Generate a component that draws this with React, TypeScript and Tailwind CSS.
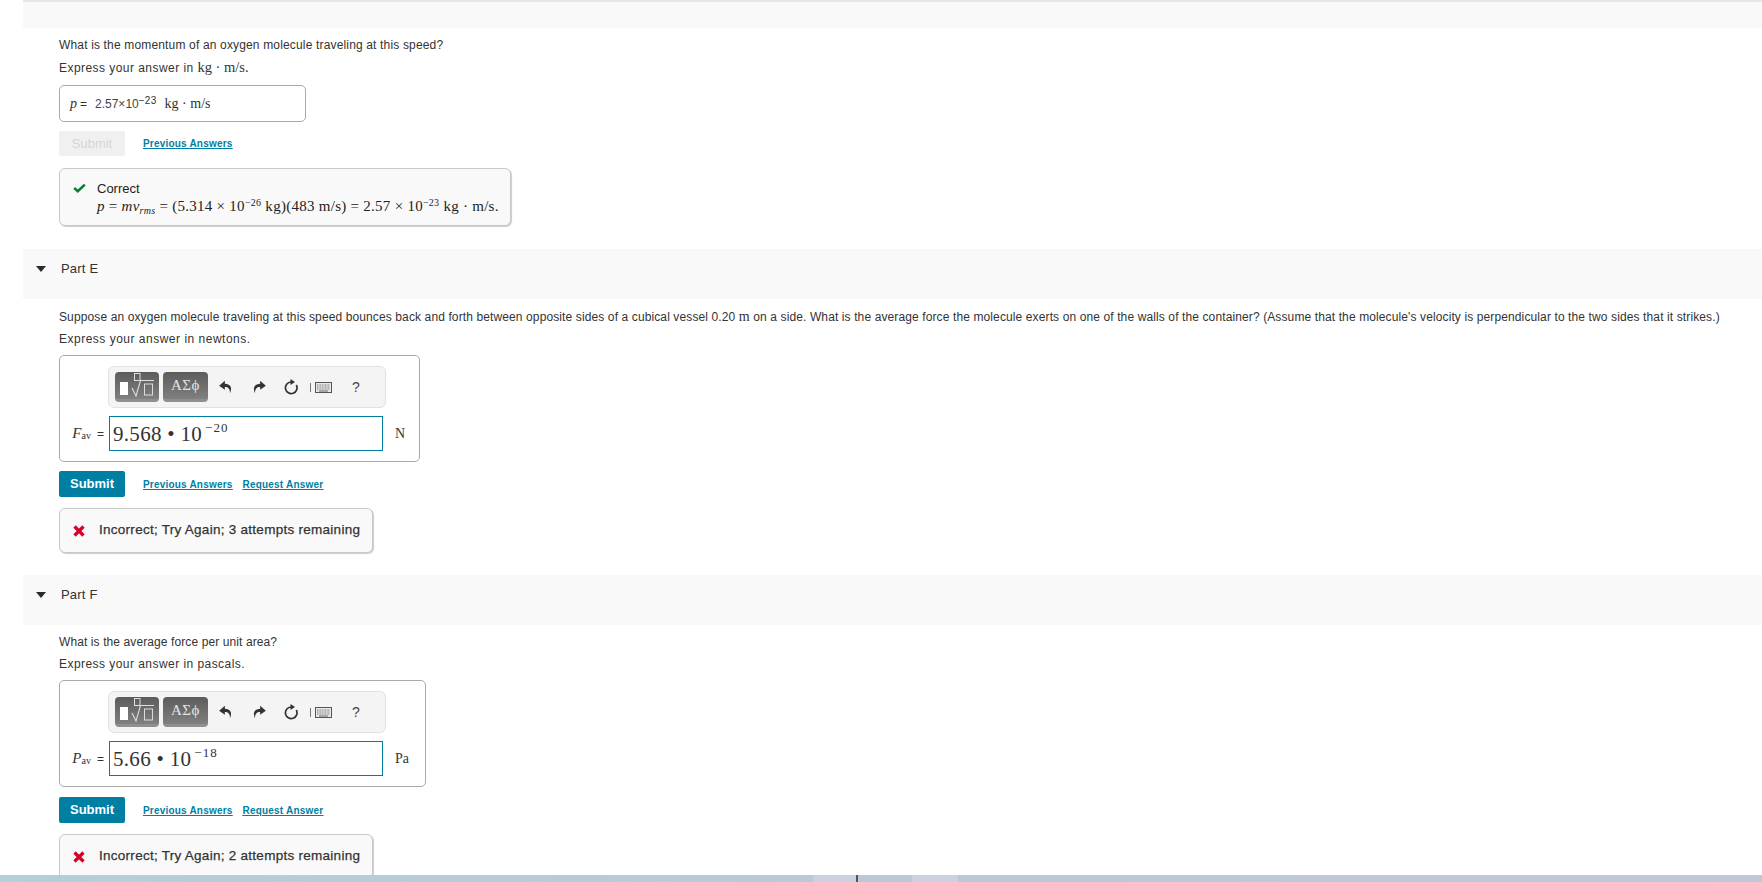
import React from 'react';

const Links = ({ request = true }: { request?: boolean }) => (
  <div className="ml-[18px] flex gap-[10px] whitespace-nowrap text-[10px] font-bold tracking-[0.2px] text-[#007fa3] underline">
    <a>Previous Answers</a>
    {request && <a>Request Answer</a>}
  </div>
);

const SubmitRow = ({ disabled = false, request = true }: { disabled?: boolean; request?: boolean }) => (
  <div className="flex items-center">
    <button
      className={
        disabled
          ? 'h-[25px] w-[66px] rounded-[2px] bg-[#f0f0f0] text-[13px] text-[#d6d6d6]'
          : 'h-[26px] w-[66px] rounded-[2px] bg-[#007fa3] text-[13px] font-bold text-white'
      }
    >
      Submit
    </button>
    <Links request={request} />
  </div>
);

const Feedback = ({ attempts }: { attempts: number }) => (
  <div className="mt-[11px] flex h-[45px] w-[314px] items-center rounded-[6px] border border-[#c8c8c8] bg-[#f9f9f9] pl-[13px] shadow-[1px_1px_1px_#ccc]">
    <svg viewBox="0 0 12 12" className="h-[12px] w-[12px] shrink-0">
      <path d="M1.5 1.5 L10.5 10.5 M10.5 1.5 L1.5 10.5" stroke="#d6002a" strokeWidth="3.2" />
    </svg>
    <span className="ml-[14px] whitespace-nowrap text-[13.5px] tracking-[0.27px] text-[#333] [-webkit-text-stroke:0.25px_#333]">
      Incorrect; Try Again; {attempts} attempts remaining
    </span>
  </div>
);

const Toolbar = () => (
  <div className="flex h-[42px] w-[278px] items-center rounded-[6px] border border-[#e2e2e2] bg-[#f4f4f4] pl-[6px]">
    <div className="flex h-[30px] w-[44px] items-center rounded-[4px] border-b-[3px] border-[#8f8f8f] bg-gradient-to-b from-[#5c5c5c] to-[#808080] pl-[5px]">
      <svg viewBox="0 0 38 26" className="h-[26px] w-[38px]">
        <rect x="0" y="9" width="8" height="13" fill="#fff" />
        <rect x="14.5" y="0.5" width="5.5" height="7" fill="none" stroke="#ddd" strokeWidth="1" />
        <path d="M12 15 L16 23 L20.5 7.5 L34 7.5" fill="none" stroke="#ddd" strokeWidth="1.1" />
        <rect x="24.5" y="11" width="8" height="11" fill="none" stroke="#ddd" strokeWidth="1" />
      </svg>
    </div>
    <div className="ml-[4px] flex h-[30px] w-[45px] items-center justify-center rounded-[4px] border-b-[3px] border-[#8f8f8f] bg-gradient-to-b from-[#5c5c5c] to-[#808080] font-['Liberation_Serif',serif] text-[15px] tracking-[0.5px] text-[#e4e4e4]">
      ΑΣϕ
    </div>
    <svg viewBox="0 0 14 14" className="ml-[10px] h-[16px] w-[16px]">
      <path d="M6 1.5 L1 6 L6 9.5 V7 C9 7 10.5 8.5 10.5 12.5 C12.5 8 11.5 4.5 6 4.2 Z" fill="#333" />
    </svg>
    <svg viewBox="0 0 14 14" className="ml-[17px] h-[16px] w-[16px]">
      <path d="M8 1.5 L13 6 L8 9.5 V7 C5 7 3.5 8.5 3.5 12.5 C1.5 8 2.5 4.5 8 4.2 Z" fill="#333" />
    </svg>
    <svg viewBox="0 0 16 16" className="ml-[16px] h-[16px] w-[16px]">
      <path d="M8 3 A5.8 5.8 0 1 0 13.3 6" fill="none" stroke="#333" strokeWidth="1.7" />
      <path d="M7.5 0 L12 3 L7.5 6 Z" fill="#333" />
    </svg>
    <span className="ml-[11px] h-[9px] w-px bg-[#777]" />
    <svg viewBox="0 0 17 11" className="ml-[4px] h-[11px] w-[17px]">
      <rect x="0.5" y="0.5" width="16" height="10" fill="#e8e8e8" stroke="#555" />
      <path d="M2 3 H15 M2 5 H15 M2 7 H15" stroke="#777" strokeWidth="1" strokeDasharray="1 0.6" />
      <path d="M4 9 H13" stroke="#666" strokeWidth="1" />
    </svg>
    <span className="ml-[20px] text-[14px] text-[#444]">?</span>
  </div>
);

const MathBox = ({
  symbol,
  value,
  exp,
  unit,
  width,
}: {
  symbol: string;
  value: string;
  exp: string;
  unit: string;
  width: string;
}) => (
  <div className={`mt-[8px] h-[107px] rounded-[5px] border border-[#aaa] pt-[10px] ${width}`}>
    <div className="ml-[48px]">
      <Toolbar />
    </div>
    <div className="mt-[8px] flex items-center">
      <div className="flex w-[49px] items-center justify-end pr-[5px] font-['Liberation_Serif',serif] text-[15px] text-[#333]">
        <i>{symbol}</i>
        <span className="mt-[4px] text-[10px]">av</span>
        <span className="ml-[6px] font-['Liberation_Sans',sans-serif] text-[12px]">=</span>
      </div>
      <div className="h-[35px] w-[274px] border border-[#007fa3] pl-[3px] font-['Liberation_Serif',serif] text-[21px] leading-[35px] tracking-[0.3px] text-[#333]">
        {value} • 10
        <span className="relative top-[-9px] ml-[3px] text-[13px] tracking-[1px]">−{exp}</span>
      </div>
      <span className="ml-[12px] font-['Liberation_Serif',serif] text-[14px] text-[#333]">{unit}</span>
    </div>
  </div>
);

const PartHeader = ({ name }: { name: string }) => (
  <div className="flex h-[50px] items-center bg-[#f9f9f9] pb-[10px] pl-[12.5px]">
    <svg viewBox="0 0 10 6" className="h-[6px] w-[10px]">
      <path d="M0 0 H10 L5 6 Z" fill="#2b2b2b" />
    </svg>
    <span className="ml-[15.5px] text-[13px] tracking-[0.2px] text-[#333]">{name}</span>
  </div>
);

export default function App() {
  return (
    <div className="relative h-[882px] w-[1762px] overflow-hidden bg-white font-['Liberation_Sans',sans-serif] text-[#333]">
      <div className="ml-[23px] h-[28px] border-t-2 border-[#e6e6e6] bg-[#f9f9f9]" />

      <div className="ml-[59px] pt-[9px]">
        <p className="h-[16px] text-[12px] leading-[16px] tracking-[0.16px]">
          What is the momentum of an oxygen molecule traveling at this speed?
        </p>
        <p className="mt-[6px] h-[16px] text-[12px] leading-[16px] tracking-[0.45px]">
          Express your answer in{' '}
          <span className="font-['Liberation_Serif',serif] text-[14.5px] tracking-normal">kg · m/s.</span>
        </p>
        <div className="mt-[10px] flex h-[37px] w-[247px] items-center rounded-[5px] border border-[#aaa] pl-[10px] text-[12px]">
          <i className="font-['Liberation_Serif',serif] text-[14px]">p</i>
          <span className="ml-[3px]">=</span>
          <span className="ml-[8px] text-[#444]">2.57×10</span>
          <span className="relative top-[-3px] text-[10px] tracking-[0.3px]">−23</span>
          <span className="ml-[8px] font-['Liberation_Serif',serif] text-[14px]">kg · m/s</span>
        </div>
        <div className="mt-[9px]">
          <SubmitRow disabled request={false} />
        </div>
        <div className="mt-[12px] flex h-[58px] w-[452px] rounded-[6px] border border-[#c8c8c8] bg-[#f9f9f9] pl-[13px] pt-[12px] shadow-[1px_1px_1px_#ccc]">
          <svg viewBox="0 0 13 10" className="mt-[2px] h-[10px] w-[13px] shrink-0">
            <path d="M1.2 5 L4.8 8.2 L11.8 1.6" fill="none" stroke="#038238" strokeWidth="2.6" />
          </svg>
          <div className="ml-[11px]">
            <div className="h-[16px] text-[13px] leading-[16px] text-[#222]">Correct</div>
            <div className="mt-[1px] whitespace-nowrap font-['Liberation_Serif',serif] text-[15px] leading-[17px] tracking-[0.27px] text-[#222]">
              <i>p</i> = <i>mv</i>
              <sub className="text-[10px]">
                <i>rms</i>
              </sub>{' '}
              = (5.314 × 10
              <sup className="text-[10px]">−26</sup> kg)(483 m/s) = 2.57 × 10
              <sup className="text-[10px]">−23</sup> kg · m/s.
            </div>
          </div>
        </div>
      </div>

      <div className="ml-[23px] mt-[23px]">
        <PartHeader name="Part E" />
      </div>
      <div className="ml-[59px] pt-[10px]">
        <p className="h-[16px] whitespace-nowrap text-[12px] leading-[16px] tracking-[0.115px]">
          Suppose an oxygen molecule traveling at this speed bounces back and forth between opposite sides of a cubical
          vessel 0.20 <span className="font-['Liberation_Serif',serif] text-[14px]">m</span> on a side. What is the
          average force the molecule exerts on one of the walls of the container? (Assume that the molecule's velocity
          is perpendicular to the two sides that it strikes.)
        </p>
        <p className="mt-[6px] h-[16px] text-[12px] leading-[16px] tracking-[0.5px]">Express your answer in newtons.</p>
        <MathBox symbol="F" value="9.568" exp="20" unit="N" width="w-[361px]" />
        <div className="mt-[9px]">
          <SubmitRow />
        </div>
        <Feedback attempts={3} />
      </div>

      <div className="ml-[23px] mt-[22px]">
        <PartHeader name="Part F" />
      </div>
      <div className="ml-[59px] pt-[9px]">
        <p className="h-[16px] text-[12px] leading-[16px] tracking-[0.1px]">What is the average force per unit area?</p>
        <p className="mt-[6px] h-[16px] text-[12px] leading-[16px] tracking-[0.45px]">Express your answer in pascals.</p>
        <MathBox symbol="P" value="5.66" exp="18" unit="Pa" width="w-[367px]" />
        <div className="mt-[10px]">
          <SubmitRow />
        </div>
        <Feedback attempts={2} />
      </div>

      <div className="absolute inset-x-0 bottom-0 flex h-[7px] bg-gradient-to-r from-[#b4cfd9] via-[#bcc8d6] to-[#c0c8d8]">
        <span className="ml-[813px] w-[43px] bg-[#ccd1df]" />
        <span className="w-[2px] bg-[#555]" />
        <span className="ml-[54px] w-[46px] bg-[#ccd1df]" />
      </div>
    </div>
  );
}
